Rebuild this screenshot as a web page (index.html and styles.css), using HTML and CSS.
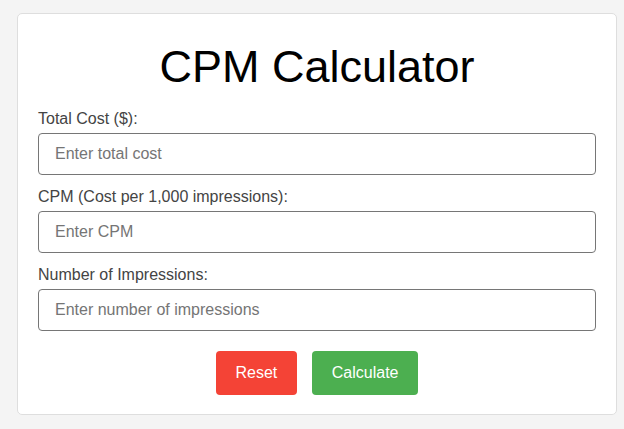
FILE: index.html
```html
<!DOCTYPE html>
<html lang="en">
<head>
  <meta charset="UTF-8" />
  <meta name="viewport" content="width=device-width, initial-scale=1.0" />
  <title>CPM Calculator</title>
  <link rel="stylesheet" href="styles.css">
</head>
<body>

  <div class="calculator">
    <h1>CPM Calculator</h1>

    <div class="form-group">
      <label for="cost">Total Cost ($):</label>
      <input type="number" id="cost" placeholder="Enter total cost">
    </div>

    <div class="form-group">
      <label for="cpm">CPM (Cost per 1,000 impressions):</label>
      <input type="number" id="cpm" placeholder="Enter CPM">
    </div>

    <div class="form-group">
      <label for="impressions">Number of Impressions:</label>
      <input type="number" id="impressions" placeholder="Enter number of impressions">
    </div>

    <div class="buttons">
      <button class="btn reset" onclick="resetForm()">Reset</button>
      <button class="btn calculate" onclick="calculate()">Calculate</button>
    </div>
  </div>

  <script>
    function resetForm() {
      ['cost', 'cpm', 'impressions'].forEach(id => document.getElementById(id).value = '');
    }

    function calculate() {
      const cost = parseFloat(document.getElementById('cost').value);
      const cpm = parseFloat(document.getElementById('cpm').value);
      const imp = parseFloat(document.getElementById('impressions').value);

      if (!isNaN(cost) && !isNaN(imp) && isNaN(cpm)) {
        document.getElementById('cpm').value = (cost / imp * 1000).toFixed(2);
      } else if (!isNaN(cpm) && !isNaN(imp) && isNaN(cost)) {
        document.getElementById('cost').value = (cpm * imp / 1000).toFixed(2);
      } else if (!isNaN(cost) && !isNaN(cpm) && isNaN(imp)) {
        document.getElementById('impressions').value = Math.round(cost / cpm * 1000);
      }
    }
  </script>
</body>
</html>
```

FILE: styles.css
```css
body {
  margin: 0;
  padding: 13px 8px 0 17px;
  font-family: 'Liberation Sans', Arial, sans-serif;
  background: #f4f4f4;
  color: #333;
}
.calculator {
  width: 600px;
  box-sizing: border-box;
  background: white;
  border: 1px solid #dedede;
  border-radius: 5px;
  padding: 27px 20px 19px;
}
.calculator h1 {
  margin: 0 0 17px;
  font-size: 45px;
  font-weight: normal;
  text-align: center;
  color: #000;
  line-height: 52px;
}
.form-group {
  margin-bottom: 13px;
}
.form-group label {
  display: block;
  font-size: 16px;
  margin-bottom: 5px;
  color: #444;
}
.form-group input {
  display: block;
  width: 100%;
  height: 42px;
  box-sizing: border-box;
  padding: 0 16px;
  border: 1px solid #767676;
  border-radius: 4px;
  font-family: inherit;
  font-size: 16px;
}
.form-group input::placeholder {
  color: #757575;
}
.buttons {
  text-align: center;
  padding-top: 7px;
}
.btn {
  margin: 0 5px;
  height: 44px;
  padding: 0 20px;
  border: none;
  border-radius: 4px;
  color: white;
  font-family: inherit;
  font-size: 16px;
  cursor: pointer;
}
.btn.reset {
  background: #f44336;
}
.btn.calculate {
  background: #4caf50;
}
```
